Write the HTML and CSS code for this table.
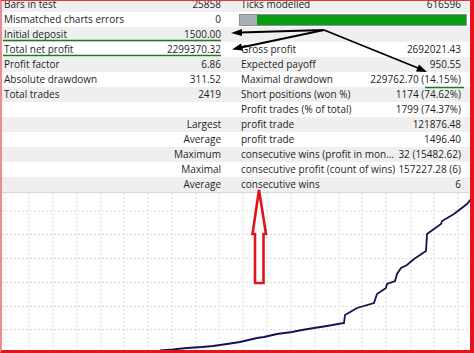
FILE: index.html
```html
<!DOCTYPE html>
<html>
<head>
<meta charset="utf-8">
<link rel="stylesheet" href="styles.css">
</head>
<body>
<div class="frame">
  <div class="report">
    <div class="row"><div class="half left"><span class="lbl">Bars in test</span><span class="val">25858</span></div><div class="half right"><span class="lbl">Ticks modelled</span><span class="val">616596</span></div></div>
    <div class="row"><div class="half left"><span class="lbl">Mismatched charts errors</span><span class="val">0</span></div><div class="half right bar-cell"><div class="quality"><div class="q-grey"></div><div class="q-green"></div></div></div></div>
    <div class="row"><div class="half left"><span class="lbl">Initial deposit</span><span class="val">1500.00</span></div><div class="half right"></div></div>
    <div class="row"><div class="half left"><span class="lbl">Total net profit</span><span class="val">2299370.32</span></div><div class="half right"><span class="lbl">Gross profit</span><span class="val">2692021.43</span></div></div>
    <div class="row"><div class="half left"><span class="lbl">Profit factor</span><span class="val">6.86</span></div><div class="half right"><span class="lbl">Expected payoff</span><span class="val">950.55</span></div></div>
    <div class="row"><div class="half left"><span class="lbl">Absolute drawdown</span><span class="val">311.52</span></div><div class="half right"><span class="lbl">Maximal drawdown</span><span class="val">229762.70 (14.15%)</span></div></div>
    <div class="row"><div class="half left"><span class="lbl">Total trades</span><span class="val">2419</span></div><div class="half right"><span class="lbl">Short positions (won %)</span><span class="val">1174 (74.62%)</span></div></div>
    <div class="row"><div class="half left"></div><div class="half right"><span class="lbl">Profit trades (% of total)</span><span class="val">1799 (74.37%)</span></div></div>
    <div class="row"><div class="half left"><span class="lbl"></span><span class="val">Largest</span></div><div class="half right"><span class="lbl">profit trade</span><span class="val">121876.48</span></div></div>
    <div class="row"><div class="half left"><span class="lbl"></span><span class="val">Average</span></div><div class="half right"><span class="lbl">profit trade</span><span class="val">1496.40</span></div></div>
    <div class="row"><div class="half left"><span class="lbl"></span><span class="val">Maximum</span></div><div class="half right"><span class="lbl">consecutive wins (profit in mon...</span><span class="val">32 (15482.62)</span></div></div>
    <div class="row"><div class="half left"><span class="lbl"></span><span class="val">Maximal</span></div><div class="half right"><span class="lbl">consecutive profit (count of wins)</span><span class="val">157227.28 (6)</span></div></div>
    <div class="row"><div class="half left"><span class="lbl"></span><span class="val">Average</span></div><div class="half right"><span class="lbl">consecutive wins</span><span class="val">6</span></div></div>
  </div>
  <div class="chart">
    <svg class="chart-svg" width="468" height="158" viewBox="0 0 468 158">
      <g class="grid">
        <line x1="3" y1="0" x2="3" y2="158"/><line x1="27" y1="0" x2="27" y2="158"/><line x1="51" y1="0" x2="51" y2="158"/><line x1="75" y1="0" x2="75" y2="158"/><line x1="99" y1="0" x2="99" y2="158"/><line x1="122" y1="0" x2="122" y2="158"/><line x1="146" y1="0" x2="146" y2="158"/><line x1="170" y1="0" x2="170" y2="158"/><line x1="194" y1="0" x2="194" y2="158"/><line x1="217" y1="0" x2="217" y2="158"/><line x1="241" y1="0" x2="241" y2="158"/><line x1="265" y1="0" x2="265" y2="158"/><line x1="289" y1="0" x2="289" y2="158"/><line x1="313" y1="0" x2="313" y2="158"/><line x1="337" y1="0" x2="337" y2="158"/><line x1="360" y1="0" x2="360" y2="158"/><line x1="384" y1="0" x2="384" y2="158"/><line x1="409" y1="0" x2="409" y2="158"/><line x1="432" y1="0" x2="432" y2="158"/><line x1="456" y1="0" x2="456" y2="158"/>
        <line x1="0" y1="18" x2="468" y2="18"/><line x1="0" y1="41.5" x2="468" y2="41.5"/><line x1="0" y1="65.5" x2="468" y2="65.5"/><line x1="0" y1="89.5" x2="468" y2="89.5"/><line x1="0" y1="113.5" x2="468" y2="113.5"/><line x1="0" y1="136.5" x2="468" y2="136.5"/>
      </g>
      <polyline class="curve" points="158,157.5 171,156.5 185,155 200,154 211,153 225,151 238,149 255,145 262,144 275,141 290,139 300,137 312,135 325,133 342,130 343,122 355,115 372,110 375,101 384,95 385,91 393,88 395,81 399,75 405,72 412,66 424,58 425,41 439,31 440,28 452,21 465,11 469,6"/>
    </svg>
  </div>
  <svg class="overlay" width="474" height="353" viewBox="0 0 474 353">
    <g class="blk">
      <line x1="324" y1="30" x2="240" y2="32.5"/>
      <polygon points="231,33 242,29 242,36"/>
      <line x1="324" y1="30" x2="241" y2="47.5"/>
      <polygon points="232,49.5 241,43.5 243,50.5"/>
      <line x1="324" y1="30" x2="418" y2="68"/>
      <polygon points="427,72 416,71.5 419,64.5"/>
    </g>
    <g class="green">
      <line x1="3" y1="40.5" x2="221" y2="40.5"/>
      <line x1="3" y1="55.5" x2="221" y2="55.5"/>
      <line x1="425" y1="87.5" x2="464" y2="87.5"/>
    </g>
    <polygon class="red-arrow" points="259,190 266,234 263.5,234 263.5,283 255,283 255,234 252.5,234"/>
  </svg>
</div>
</body>
</html>
```

FILE: styles.css
```css
html, body {
  margin: 0;
  padding: 0;
  background: #ffffff;
}

.frame {
  position: relative;
  width: 474px;
  height: 353px;
  box-sizing: border-box;
  border-top: 1px solid #e8333a;
  border-right: 4px solid #e4141c;
  border-bottom: 3px solid #e4141c;
  border-left: 2px solid #ee8c90;
  overflow: hidden;
  display: flex;
  flex-direction: column;
  font-family: "Open Sans", "Noto Sans", sans-serif;
  font-size: 10px;
  color: #1e1e1e;
}

.report {
  margin-top: -4px;
  display: flex;
  flex-direction: column;
}

.row {
  display: flex;
  height: 15px;
  line-height: 15px;
  white-space: nowrap;
}

.row:nth-child(odd) {
  background: #efefef;
}

.row:nth-child(even) {
  background: #ffffff;
}

.half {
  display: flex;
  align-items: center;
  box-sizing: border-box;
  overflow: hidden;
}

.left {
  width: 234px;
  padding: 0 15px 0 2px;
}

.right {
  flex: 1;
  padding: 0 9px 0 5px;
}

.lbl {
  flex: 1;
  overflow: hidden;
}

.val {
  text-align: right;
}

.bar-cell {
  padding: 0 3px 0 3px;
}

.quality {
  flex: 1;
  height: 12px;
  box-sizing: border-box;
  border: 1px solid #8a9096;
  display: flex;
}

.q-grey {
  width: 17px;
  background: #a9afb5;
}

.q-green {
  flex: 1;
  background: #0a9c12;
}

.chart {
  flex: 1;
  background: #ffffff;
  border-top: 1px solid #d6d6d6;
}

.chart-svg {
  display: block;
}

.grid line {
  stroke: #d9d9d9;
  stroke-width: 1;
  stroke-dasharray: 2 2;
}

.curve {
  fill: none;
  stroke: #101450;
  stroke-width: 1.8;
  stroke-linejoin: miter;
}

.overlay {
  position: absolute;
  left: -2px;
  top: -1px;
  pointer-events: none;
}

.blk line {
  stroke: #000000;
  stroke-width: 1.8;
}

.blk polygon {
  fill: #000000;
}

.green line {
  stroke: #1a7a24;
  stroke-width: 1.6;
}

.red-arrow {
  fill: #ffffff;
  stroke: #e0141c;
  stroke-width: 2.6;
  stroke-linejoin: miter;
}
```
